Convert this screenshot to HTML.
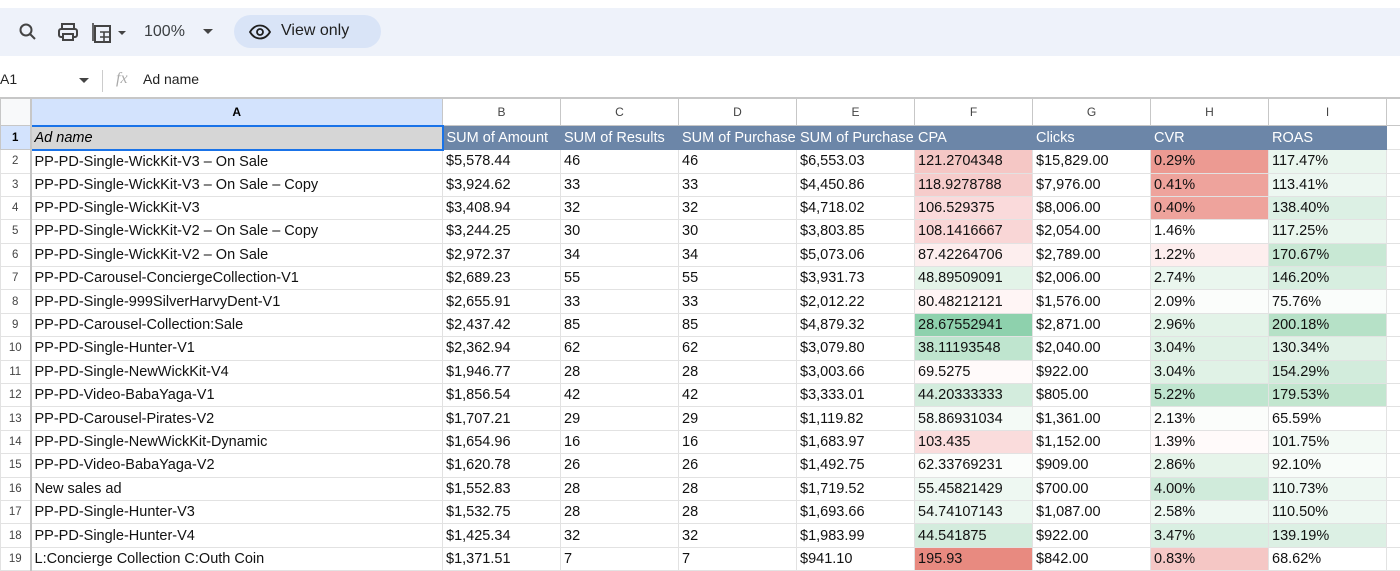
<!DOCTYPE html>
<html><head><meta charset="utf-8"><style>
*{margin:0;padding:0;box-sizing:border-box}
body{width:1400px;height:566px;overflow:hidden;background:#fff;font-family:"Liberation Sans",sans-serif;position:relative}
.tb{position:absolute;left:0;top:8px;width:1400px;height:48px;background:#eef2fa}
.tb span{position:absolute;top:14px;font-size:16px;color:#3c4043}
.vo{position:absolute;left:234px;top:7px;width:147px;height:33px;background:#d9e4f7;border-radius:17px}
.fb{position:absolute;top:62px;left:0;width:1400px;height:36px;border-bottom:1px solid #c7c7c7}
table{position:absolute;left:0;top:98px;border-collapse:collapse;table-layout:fixed;width:1400px}
td{height:23.4px;border:1px solid #e2e2e2;font-size:14.5px;color:#111;padding:0 3px;white-space:nowrap;overflow:hidden;line-height:22px}
tr.ch td{height:27px;background:#fff;color:#444;font-size:12px;text-align:center;border-color:#c7c7c7}
td.rn{font-size:11.5px;color:#444;text-align:center;padding:0;border-right:2px solid #c4c4c4}
tr.h td{background:#6c86a8;color:#fff;border-color:#6c86a8}
tr.h td.rn{background:#d3e3fd;color:#000;font-weight:bold;border-color:#c7c7c7}
tr.h td.a{background:#d6d6d6;color:#000;font-style:italic;border:2px solid #1a73e8}
</style></head><body>
<div class="tb">
<svg style="position:absolute;left:18px;top:14px" width="20" height="20" viewBox="0 0 20 20"><circle cx="8" cy="8" r="5.5" fill="none" stroke="#444" stroke-width="2"/><path d="M12 12l5 5" stroke="#444" stroke-width="2"/></svg>
<svg style="position:absolute;left:57px;top:14px" width="22" height="20" viewBox="0 0 22 20"><rect x="5" y="2" width="12" height="5" fill="none" stroke="#444" stroke-width="2"/><rect x="2" y="7" width="18" height="8" rx="2" fill="none" stroke="#444" stroke-width="2"/><rect x="6" y="12" width="10" height="6" fill="#eef2fa" stroke="#444" stroke-width="2"/></svg>
<svg style="position:absolute;left:92px;top:14px" width="38" height="22" viewBox="0 0 38 22"><rect x="3" y="4" width="15" height="16" fill="none" stroke="#444" stroke-width="2"/><path d="M1 1v18M8 10h10M8 15h10M12 10v10" stroke="#444" stroke-width="1.6"/><path d="M26 9l4 4 4-4z" fill="#444"/></svg>
<span style="left:144px;top:15px">100%</span>
<svg style="position:absolute;left:202px;top:20px" width="12" height="8"><path d="M1 1l5 5 5-5z" fill="#444"/></svg>
<div class="vo"><svg style="position:absolute;left:15px;top:9px" width="22" height="16" viewBox="0 0 22 16"><path d="M1 8C4 3 7.5 1.5 11 1.5S18 3 21 8C18 13 14.5 14.5 11 14.5S4 13 1 8z" fill="none" stroke="#1f1f1f" stroke-width="1.8"/><circle cx="11" cy="8" r="3" fill="none" stroke="#1f1f1f" stroke-width="1.8"/></svg><span style="left:47px;top:7px;color:#1f1f1f">View only</span></div>
</div>
<div class="fb">
<span style="position:absolute;left:0;top:9px;font-size:14px;color:#222">A1</span>
<svg style="position:absolute;left:78px;top:15px" width="12" height="8"><path d="M1 1l5 5 5-5z" fill="#444"/></svg>
<div style="position:absolute;left:102px;top:8px;width:1px;height:22px;background:#ccc"></div>
<span style="position:absolute;left:116px;top:8px;font-size:16px;color:#aaa;font-style:italic;font-family:'Liberation Serif',serif">fx</span>
<span style="position:absolute;left:143px;top:9px;font-size:14px;color:#222">Ad name</span>
</div>
<table>
<colgroup><col style="width:30px"><col style="width:412px"><col style="width:118px"><col style="width:118px"><col style="width:118px"><col style="width:118px"><col style="width:118px"><col style="width:118px"><col style="width:118px"><col style="width:118px"><col style="width:14px"></colgroup>
<tr class="ch"><td class="rn" style="background:#f8f9fa"></td><td style="background:#d3e3fd;color:#000;font-weight:bold">A</td><td>B</td><td>C</td><td>D</td><td>E</td><td>F</td><td>G</td><td>H</td><td>I</td><td></td></tr>
<tr class="h"><td class="rn">1</td><td class="a">Ad name</td><td>SUM of Amount</td><td>SUM of Results</td><td>SUM of Purchase</td><td>SUM of Purchase</td><td>CPA</td><td>Clicks</td><td>CVR</td><td>ROAS</td><td style="background:#fff;border-color:#e2e2e2"></td></tr>
<tr><td class="rn">2</td><td>PP-PD-Single-WickKit-V3 – On Sale</td><td>$5,578.44</td><td>46</td><td>46</td><td>$6,553.03</td><td style="background:#f5c7c5">121.2704348</td><td>$15,829.00</td><td style="background:#ec9a92">0.29%</td><td style="background:#eaf6ee">117.47%</td><td></td></tr>
<tr><td class="rn">3</td><td>PP-PD-Single-WickKit-V3 – On Sale – Copy</td><td>$3,924.62</td><td>33</td><td>33</td><td>$4,450.86</td><td style="background:#f6cccb">118.9278788</td><td>$7,976.00</td><td style="background:#eea39c">0.41%</td><td style="background:#edf7f1">113.41%</td><td></td></tr>
<tr><td class="rn">4</td><td>PP-PD-Single-WickKit-V3</td><td>$3,408.94</td><td>32</td><td>32</td><td>$4,718.02</td><td style="background:#fadadb">106.529375</td><td>$8,006.00</td><td style="background:#eea39c">0.40%</td><td style="background:#dcf0e4">138.40%</td><td></td></tr>
<tr><td class="rn">5</td><td>PP-PD-Single-WickKit-V2 – On Sale – Copy</td><td>$3,244.25</td><td>30</td><td>30</td><td>$3,803.85</td><td style="background:#f9d6d6">108.1416667</td><td>$2,054.00</td><td>1.46%</td><td style="background:#eaf6ee">117.25%</td><td></td></tr>
<tr><td class="rn">6</td><td>PP-PD-Single-WickKit-V2 – On Sale</td><td>$2,972.37</td><td>34</td><td>34</td><td>$5,073.06</td><td style="background:#fdeeee">87.42264706</td><td>$2,789.00</td><td style="background:#fdeeee">1.22%</td><td style="background:#c8e8d4">170.67%</td><td></td></tr>
<tr><td class="rn">7</td><td>PP-PD-Carousel-ConciergeCollection-V1</td><td>$2,689.23</td><td>55</td><td>55</td><td>$3,931.73</td><td style="background:#e3f3e8">48.89509091</td><td>$2,006.00</td><td style="background:#eaf6ee">2.74%</td><td style="background:#d7eee0">146.20%</td><td></td></tr>
<tr><td class="rn">8</td><td>PP-PD-Single-999SilverHarvyDent-V1</td><td>$2,655.91</td><td>33</td><td>33</td><td>$2,012.22</td><td style="background:#fff5f5">80.48212121</td><td>$1,576.00</td><td style="background:#fbfdfb">2.09%</td><td style="background:#fafdfb">75.76%</td><td></td></tr>
<tr><td class="rn">9</td><td>PP-PD-Carousel-Collection:Sale</td><td>$2,437.42</td><td>85</td><td>85</td><td>$4,879.32</td><td style="background:#8ed1ad">28.67552941</td><td>$2,871.00</td><td style="background:#e3f3e8">2.96%</td><td style="background:#b6e1c7">200.18%</td><td></td></tr>
<tr><td class="rn">10</td><td>PP-PD-Single-Hunter-V1</td><td>$2,362.94</td><td>62</td><td>62</td><td>$3,079.80</td><td style="background:#bfe5cf">38.11193548</td><td>$2,040.00</td><td style="background:#e0f2e6">3.04%</td><td style="background:#e1f2e7">130.34%</td><td></td></tr>
<tr><td class="rn">11</td><td>PP-PD-Single-NewWickKit-V4</td><td>$1,946.77</td><td>28</td><td>28</td><td>$3,003.66</td><td style="background:#fffafa">69.5275</td><td>$922.00</td><td style="background:#e0f2e6">3.04%</td><td style="background:#d2ecdc">154.29%</td><td></td></tr>
<tr><td class="rn">12</td><td>PP-PD-Video-BabaYaga-V1</td><td>$1,856.54</td><td>42</td><td>42</td><td>$3,333.01</td><td style="background:#d3ecdd">44.20333333</td><td>$805.00</td><td style="background:#bfe5cf">5.22%</td><td style="background:#c2e6cf">179.53%</td><td></td></tr>
<tr><td class="rn">13</td><td>PP-PD-Carousel-Pirates-V2</td><td>$1,707.21</td><td>29</td><td>29</td><td>$1,119.82</td><td style="background:#f4faf6">58.86931034</td><td>$1,361.00</td><td style="background:#fbfdfb">2.13%</td><td>65.59%</td><td></td></tr>
<tr><td class="rn">14</td><td>PP-PD-Single-NewWickKit-Dynamic</td><td>$1,654.96</td><td>16</td><td>16</td><td>$1,683.97</td><td style="background:#fadcdc">103.435</td><td>$1,152.00</td><td style="background:#fffafa">1.39%</td><td style="background:#f3faf5">101.75%</td><td></td></tr>
<tr><td class="rn">15</td><td>PP-PD-Video-BabaYaga-V2</td><td>$1,620.78</td><td>26</td><td>26</td><td>$1,492.75</td><td style="background:#fbfdfb">62.33769231</td><td>$909.00</td><td style="background:#e6f4ea">2.86%</td><td style="background:#f8fcf9">92.10%</td><td></td></tr>
<tr><td class="rn">16</td><td>New sales ad</td><td>$1,552.83</td><td>28</td><td>28</td><td>$1,719.52</td><td style="background:#eef8f2">55.45821429</td><td>$700.00</td><td style="background:#d0ebdb">4.00%</td><td style="background:#eef8f2">110.73%</td><td></td></tr>
<tr><td class="rn">17</td><td>PP-PD-Single-Hunter-V3</td><td>$1,532.75</td><td>28</td><td>28</td><td>$1,693.66</td><td style="background:#ecf7f0">54.74107143</td><td>$1,087.00</td><td style="background:#eef8f2">2.58%</td><td style="background:#eef8f2">110.50%</td><td></td></tr>
<tr><td class="rn">18</td><td>PP-PD-Single-Hunter-V4</td><td>$1,425.34</td><td>32</td><td>32</td><td>$1,983.99</td><td style="background:#d3ecdd">44.541875</td><td>$922.00</td><td style="background:#d9efe2">3.47%</td><td style="background:#dcf0e4">139.19%</td><td></td></tr>
<tr><td class="rn">19</td><td>L:Concierge Collection C:Outh Coin</td><td>$1,371.51</td><td>7</td><td>7</td><td>$941.10</td><td style="background:#e88a80">195.93</td><td>$842.00</td><td style="background:#f5c7c5">0.83%</td><td>68.62%</td><td></td></tr>
</table>
</body></html>
